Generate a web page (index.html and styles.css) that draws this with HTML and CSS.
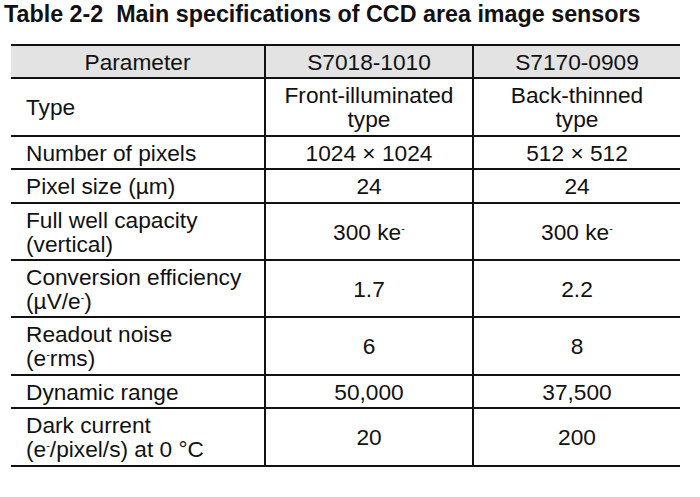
FILE: index.html
```html
<!DOCTYPE html>
<html>
<head>
<meta charset="utf-8">
<link rel="stylesheet" href="styles.css">
</head>
<body>
<h1 class="title">Table 2-2&nbsp; Main specifications of CCD area image sensors</h1>
<table class="spec">
  <colgroup>
    <col class="c1"><col class="c2"><col class="c3">
  </colgroup>
  <thead>
    <tr><th>Parameter</th><th>S7018-1010</th><th>S7170-0909</th></tr>
  </thead>
  <tbody>
    <tr><td>Type</td><td>Front-illuminated<br>type</td><td>Back-thinned<br>type</td></tr>
    <tr><td>Number of pixels</td><td>1024 × 1024</td><td>512 × 512</td></tr>
    <tr><td>Pixel size (µm)</td><td>24</td><td>24</td></tr>
    <tr><td>Full well capacity<br>(vertical)</td><td>300 ke<sup>-</sup></td><td>300 ke<sup>-</sup></td></tr>
    <tr><td>Conversion efficiency<br>(µV/e<sup>-</sup>)</td><td>1.7</td><td>2.2</td></tr>
    <tr><td>Readout noise<br>(e<sup>-</sup>rms)</td><td>6</td><td>8</td></tr>
    <tr><td>Dynamic range</td><td>50,000</td><td>37,500</td></tr>
    <tr><td>Dark current<br>(e<sup>-</sup>/pixel/s) at 0 °C</td><td>20</td><td>200</td></tr>
  </tbody>
</table>
</body>
</html>
```
FILE: styles.css
```css
html, body {
  margin: 0;
  padding: 0;
  background: #ffffff;
  color: #111111;
  font-family: "Liberation Sans", Arial, sans-serif;
}

.title {
  margin: 0;
  padding: 1px 0 0 4px;
  font-size: 23.3px;
  line-height: 26px;
  font-weight: bold;
  color: #111111;
  white-space: nowrap;
}

.spec {
  margin: 17px 0 0 11px;
  border-collapse: collapse;
  table-layout: fixed;
  width: 669px;
  font-size: 22.7px;
  line-height: 24px;
}

.c1 { width: 254px; }
.c2 { width: 208px; }
.c3 { width: 207px; }

.spec th,
.spec td {
  padding: 4px 0 3.4px 0;
  border-top: 2px solid #111111;
  border-bottom: 2px solid #111111;
  text-align: center;
  vertical-align: middle;
  font-weight: normal;
}

.spec th + th,
.spec td + td {
  border-left: 2px solid #111111;
}

.spec th {
  background: #e3e3e3;
}

.spec td:first-child {
  text-align: left;
  padding-left: 15px;
}

.spec sup {
  font-size: 11px;
  line-height: 11px;
  vertical-align: 8px;
}
```
